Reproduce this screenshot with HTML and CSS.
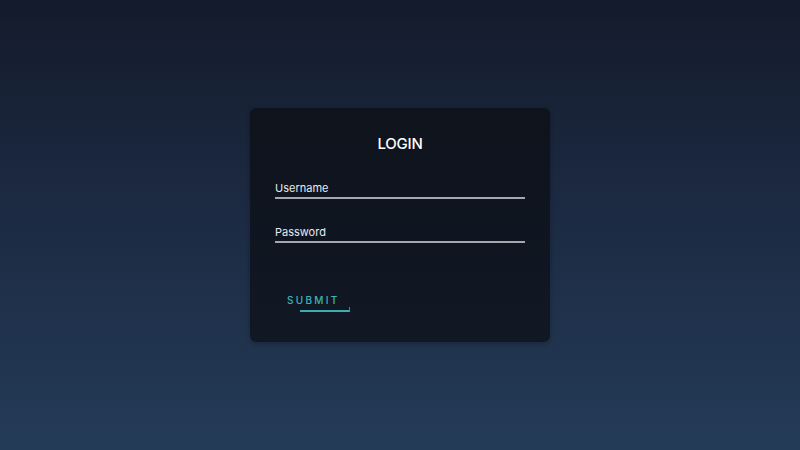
FILE: index.html
```html
<!DOCTYPE html>
<html>
<head>
<meta charset="utf-8">
<link rel="stylesheet" href="styles.css">
</head>
<body>
<div class="page">
  <form class="card">
    <h2 class="title">LOGIN</h2>
    <div class="field">
      <label class="label">Username</label>
      <div class="line"></div>
    </div>
    <div class="field">
      <label class="label">Password</label>
      <div class="line"></div>
    </div>
    <div class="submit">
      <span class="submit-text">SUBMIT</span>
      <span class="submit-bar"></span>
    </div>
  </form>
</div>
</body>
</html>
```
FILE: styles.css
```css
* { box-sizing: border-box; }
html, body { margin: 0; height: 100%; }
body {
  font-family: "Inter", "Open Sans", sans-serif;
  background: linear-gradient(180deg, #141b2b 0%, #1b2840 40%, #243b57 100%);
}
.page {
  height: 450px;
  display: flex;
  align-items: center;
  justify-content: center;
}
.card {
  width: 300px;
  height: 234px;
  background: linear-gradient(180deg, #0e131c 0%, #111824 100%);
  border-radius: 6px;
  box-shadow: 0 2px 5px rgba(0,0,0,0.25);
  padding: 26px 25px 0 25px;
  display: flex;
  flex-direction: column;
}
.title {
  margin: 0;
  text-align: center;
  color: #ffffff;
  font-size: 15px;
  font-weight: 500;
  letter-spacing: -0.2px;
  line-height: 20px;
}
.field {
  margin-top: 27px;
  display: flex;
  flex-direction: column;
}
.field + .field { margin-top: 26px; }
.label {
  color: #e8eaee;
  font-size: 11px;
  line-height: 14px;
}
.line {
  margin-top: 2px;
  height: 2px;
  background: #a3a7ae;
}
.submit {
  margin-top: 51px;
  margin-left: 12px;
  position: relative;
  width: 70px;
  height: 26px;
}
.submit-text {
  color: #3ab7bb;
  font-size: 10px;
  letter-spacing: 2.3px;
  font-weight: 500;
  line-height: 12px;
  display: block;
}
.submit-bar {
  position: absolute;
  left: 13px;
  top: 13px;
  width: 50px;
  height: 5px;
  border-right: 1px solid #2f8f94;
  border-bottom: 2px solid #3aaeb1;
}
```
